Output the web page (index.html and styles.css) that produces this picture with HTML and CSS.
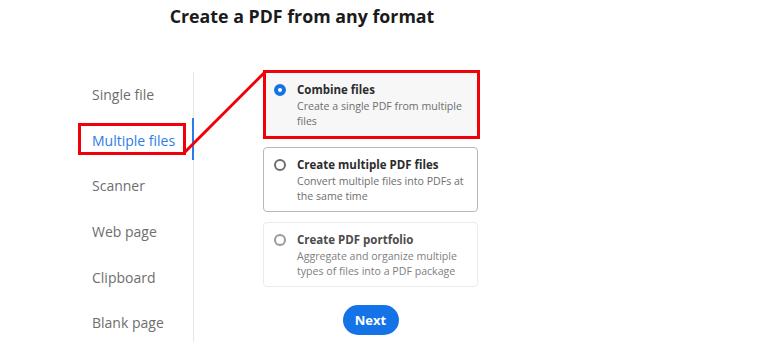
FILE: index.html
```html
<!DOCTYPE html>
<html lang="en">
<head>
  <meta charset="UTF-8" />
  <meta name="viewport" content="width=device-width, initial-scale=1.0" />
  <title>Create a PDF</title>
  <link rel="stylesheet" href="styles.css">
</head>
<body>
  <div class="page">
    <h1 class="title">Create a PDF from any format</h1>
    <div class="layout">
      <ul class="sidebar">
        <li class="side-item">Single file</li>
        <li class="side-item active">Multiple files</li>
        <li class="side-item">Scanner</li>
        <li class="side-item">Web page</li>
        <li class="side-item">Clipboard</li>
        <li class="side-item">Blank page</li>
      </ul>
      <div class="content">
        <div class="option selected">
          <span class="radio checked"></span>
          <div class="option-text">
            <div class="option-title">Combine files</div>
            <div class="option-desc">Create a single PDF from multiple files</div>
          </div>
        </div>
        <div class="option">
          <span class="radio"></span>
          <div class="option-text">
            <div class="option-title">Create multiple PDF files</div>
            <div class="option-desc">Convert multiple files into PDFs at the same time</div>
          </div>
        </div>
        <div class="option muted">
          <span class="radio"></span>
          <div class="option-text">
            <div class="option-title">Create PDF portfolio</div>
            <div class="option-desc">Aggregate and organize multiple types of files into a PDF package</div>
          </div>
        </div>
        <button class="next-btn">Next</button>
      </div>
    </div>
    <!-- red annotation drawn over the page -->
    <svg class="annotation" width="768" height="364" viewBox="0 0 768 364">
      <rect x="79.5" y="124.5" width="105" height="29" fill="none" stroke="#f00008" stroke-width="3" />
      <rect x="264.5" y="71.5" width="214" height="66" fill="none" stroke="#f00008" stroke-width="3" />
      <line x1="184" y1="153" x2="265" y2="72" stroke="#f00008" stroke-width="3" />
    </svg>
  </div>
</body>
</html>
```

FILE: styles.css
```css
html, body {
  margin: 0;
  padding: 0;
  background: #fff;
  font-family: 'Open Sans', sans-serif;
}
.page {
  position: relative;
  width: 768px;
  height: 364px;
  overflow: hidden;
}
.title {
  width: 448px;
  margin: 0 0 0 78px;
  padding-top: 4px;
  height: 72px;
  box-sizing: border-box;
  text-align: center;
  font-size: 17.8px;
  font-weight: 700;
  color: #1b1b1b;
  line-height: 24px;
}
.layout {
  display: flex;
  margin-left: 78px;
}
.sidebar {
  list-style: none;
  margin: 0;
  padding: 0;
  width: 115px;
  border-right: 1px solid #e6e6e6;
  height: 270px;
}
.side-item {
  position: relative;
  height: 45.6px;
  display: flex;
  align-items: center;
  padding-left: 14px;
  font-size: 14px;
  color: #6e6e6e;
}
.side-item.active {
  color: #2d7ce6;
}
.side-item.active::after {
  content: "";
  position: absolute;
  right: -1px;
  top: 0;
  width: 2px;
  height: 42px;
  background: #2d7ce6;
}
.content {
  display: flex;
  flex-direction: column;
  align-items: center;
  width: 215px;
  margin-left: 69px;
}
.option {
  display: flex;
  align-items: flex-start;
  width: 215px;
  height: 65px;
  box-sizing: border-box;
  padding: 9px 3px 0 8px;
  margin-bottom: 10px;
  border: 1px solid #b8b8b8;
  border-radius: 4px;
}
.option.selected {
  background: #f7f7f7;
  border-color: #f7f7f7;
}
.option.muted {
  border-color: #ebebeb;
}
.radio {
  flex: none;
  width: 12px;
  height: 12px;
  box-sizing: border-box;
  border: 2px solid #6e6e6e;
  border-radius: 50%;
  margin: 2px 11px 0 2px;
  background: #fff;
}
.radio.checked {
  border: 4px solid #1473e6;
}
.muted .radio {
  border-color: #9a9a9a;
}
.option-title {
  font-size: 11.5px;
  font-weight: 700;
  line-height: 16px;
  color: #2c2c2c;
}
.option-desc {
  font-size: 10.6px;
  line-height: 15px;
  color: #6e6e6e;
  margin-top: 1px;
}
.muted .option-title {
  color: #4b4b4b;
}
.muted .option-desc {
  color: #808080;
}
.next-btn {
  margin-top: 8px;
  width: 56px;
  height: 30px;
  border: none;
  border-radius: 15px;
  background: #1473e6;
  color: #fff;
  font-family: 'Open Sans', sans-serif;
  font-size: 13px;
  font-weight: 700;
  cursor: pointer;
}
.annotation {
  position: absolute;
  left: 0;
  top: 0;
  pointer-events: none;
}
```
